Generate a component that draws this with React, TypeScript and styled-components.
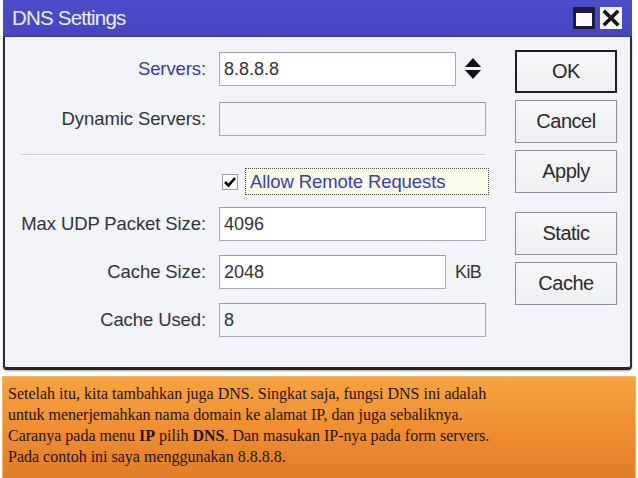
import React from "react";
import styled, { createGlobalStyle } from "styled-components";

const Global = createGlobalStyle`
  html, body { margin: 0; padding: 0; background: #ffffff; }
  body { width: 638px; height: 478px; overflow: hidden; font-family: "Liberation Sans", Arial, sans-serif; }
`;

const Page = styled.div`
  width: 638px;
  height: 478px;
  display: flex;
  flex-direction: column;
  background: #ffffff;
  overflow: hidden;
`;

const Window = styled.div`
  margin-left: 3px;
  width: 629px;
  display: flex;
  flex-direction: column;
`;

const TitleBar = styled.div`
  height: 37px;
  background: linear-gradient(#4d4dca, #4545c2);
  display: flex;
  align-items: center;
  padding: 0 10px 0 9px;
  box-sizing: border-box;
  border-bottom: 1px solid #3a3a8a;
`;

const Title = styled.div`
  flex: 1;
  color: #eeeeff;
  font-size: 20.5px;
  letter-spacing: -0.8px;
  padding-bottom: 1px;
`;

const TitleButtons = styled.div`
  display: flex;
  gap: 5px;
`;

const TitleBtn = styled.div`
  width: 22px;
  height: 22px;
  background: #fbfbfd;
  box-sizing: border-box;
  display: flex;
  align-items: center;
  justify-content: center;
`;

const Body = styled.div`
  background: #f2f4f9;
  border-left: 2px solid #2b2b33;
  border-right: 2px solid #2b2b33;
  border-bottom: 3px solid #222228;
  border-radius: 0 0 4px 4px;
  box-shadow: 0 1px 2px rgba(0,0,0,0.35);
  height: 333px;
  box-sizing: border-box;
  display: flex;
  padding: 15px 13px 0 0;
`;

const Form = styled.div`
  width: 481px;
  display: flex;
  flex-direction: column;
`;

const Row = styled.div<{ $mt?: number }>`
  display: grid;
  grid-template-columns: 201px 1fr;
  column-gap: 13px;
  align-items: center;
  margin-top: ${(p) => p.$mt ?? 0}px;
`;

const Label = styled.div<{ $blue?: boolean }>`
  text-align: right;
  font-size: 18.5px;
  letter-spacing: -0.1px;
  color: ${(p) => (p.$blue ? "#3a3aa0" : "#333338")};
  white-space: nowrap;
`;

const FieldCell = styled.div`
  display: flex;
  align-items: center;
`;

const Input = styled.div<{ $w: number; $ro?: boolean }>`
  width: ${(p) => p.$w}px;
  height: 34px;
  box-sizing: border-box;
  border: 1px solid #a9abb2;
  border-top-color: #9a9ca4;
  background: ${(p) => (p.$ro ? "#f4f5f8" : "#ffffff")};
  font-size: 18px;
  color: #333;
  display: flex;
  align-items: center;
  padding-left: 4px;
`;

const Unit = styled.div`
  margin-left: 9px;
  font-size: 18px;
  color: #333;
  letter-spacing: -0.6px;
`;

const Spinner = styled.div`
  margin-left: 9px;
  width: 16px;
  display: flex;
  align-items: center;
`;

const Separator = styled.div`
  margin: 18px 0 0 15px;
  height: 0;
  border-top: 1px solid #c9ccd4;
  border-bottom: 1px solid #ffffff;
`;

const CheckWrap = styled.div`
  display: flex;
  align-items: center;
  gap: 7px;
  margin-left: 3px;
`;

const CheckBox = styled.div`
  width: 16px;
  height: 16px;
  box-sizing: border-box;
  border: 1px solid #9b9ea6;
  background: #ffffff;
  display: flex;
  align-items: center;
  justify-content: center;
`;

const FocusLabel = styled.div`
  width: 244px;
  height: 27px;
  box-sizing: border-box;
  border: 1px dotted #4a4a3a;
  background: #fbfbe9;
  color: #3b3bb2;
  font-size: 18.5px;
  letter-spacing: -0.1px;
  display: flex;
  align-items: center;
  padding-left: 4px;
`;

const Buttons = styled.div`
  margin-left: 29px;
  margin-top: -2px;
  width: 102px;
  display: flex;
  flex-direction: column;
`;

const Group = styled.div<{ $mt?: number }>`
  display: flex;
  flex-direction: column;
  gap: 7px;
  margin-top: ${(p) => p.$mt ?? 0}px;
`;

const Button = styled.div<{ $primary?: boolean }>`
  height: 43px;
  box-sizing: border-box;
  border: ${(p) => (p.$primary ? "2px solid #1e1e22" : "1px solid #8c8e96")};
  background: linear-gradient(#f8f8fa, #eeeff2);
  display: flex;
  align-items: center;
  justify-content: center;
  font-size: 20px;
  color: #2a2a2a;
  letter-spacing: -0.5px;
`;

const Caption = styled.div`
  margin: 6px 2px 0 2px;
  flex: 1;
  background: linear-gradient(#f7a43f, #ee8a2f 60%, #e07d27);
  border: 1px solid #f9b666;
  border-bottom: none;
  padding: 6px 6px 0 5px;
  font-family: "Liberation Serif", "Times New Roman", serif;
  font-size: 16px;
  line-height: 21px;
  color: #1e1206;
  white-space: nowrap;
`;

const Strong = styled.b`
  font-weight: bold;
`;

export default function App() {
  return (
    <Page>
      <Global />
      <Window>
        <TitleBar>
          <Title>DNS Settings</Title>
          <TitleButtons>
            <TitleBtn>
              <svg width="22" height="22" viewBox="0 0 22 22">
                <rect x="1.5" y="1.5" width="19" height="19" fill="none" stroke="#1b1b3a" strokeWidth="3" />
                <rect x="3" y="3" width="16" height="3" fill="#1b1b3a" />
              </svg>
            </TitleBtn>
            <TitleBtn>
              <svg width="22" height="22" viewBox="0 0 22 22">
                <path d="M5 5 L17 17 M17 5 L5 17" stroke="#111" strokeWidth="3.6" strokeLinecap="square" />
              </svg>
            </TitleBtn>
          </TitleButtons>
        </TitleBar>
        <Body>
          <Form>
            <Row>
              <Label $blue>Servers:</Label>
              <FieldCell>
                <Input $w={237}>8.8.8.8</Input>
                <Spinner>
                  <svg width="16" height="24" viewBox="0 0 16 24">
                    <path d="M8 1 L16 10 L0 10 Z" fill="#111" />
                    <path d="M0 13 L16 13 L8 22 Z" fill="#111" />
                  </svg>
                </Spinner>
              </FieldCell>
            </Row>
            <Row $mt={16}>
              <Label>Dynamic Servers:</Label>
              <FieldCell>
                <Input $w={267} $ro />
              </FieldCell>
            </Row>
            <Separator />
            <Row $mt={12}>
              <div />
              <CheckWrap>
                <CheckBox>
                  <svg width="14" height="14" viewBox="0 0 14 14">
                    <path d="M2 7 L5.5 10.5 L12 3" fill="none" stroke="#000" strokeWidth="2.6" />
                  </svg>
                </CheckBox>
                <FocusLabel>Allow Remote Requests</FocusLabel>
              </CheckWrap>
            </Row>
            <Row $mt={12}>
              <Label>Max UDP Packet Size:</Label>
              <FieldCell>
                <Input $w={267}>4096</Input>
              </FieldCell>
            </Row>
            <Row $mt={14}>
              <Label>Cache Size:</Label>
              <FieldCell>
                <Input $w={227}>2048</Input>
                <Unit>KiB</Unit>
              </FieldCell>
            </Row>
            <Row $mt={14}>
              <Label>Cache Used:</Label>
              <FieldCell>
                <Input $w={267} $ro>8</Input>
              </FieldCell>
            </Row>
          </Form>
          <Buttons>
            <Group>
              <Button $primary>OK</Button>
              <Button>Cancel</Button>
              <Button>Apply</Button>
            </Group>
            <Group $mt={19}>
              <Button>Static</Button>
              <Button>Cache</Button>
            </Group>
          </Buttons>
        </Body>
      </Window>
      <Caption>
        Setelah itu, kita tambahkan juga DNS. Singkat saja, fungsi DNS ini adalah
        <br />
        untuk menerjemahkan nama domain ke alamat IP, dan juga sebaliknya.
        <br />
        Caranya pada menu <Strong>IP</Strong> pilih <Strong>DNS</Strong>. Dan masukan IP-nya pada form servers.
        <br />
        Pada contoh ini saya menggunakan 8.8.8.8.
      </Caption>
    </Page>
  );
}
